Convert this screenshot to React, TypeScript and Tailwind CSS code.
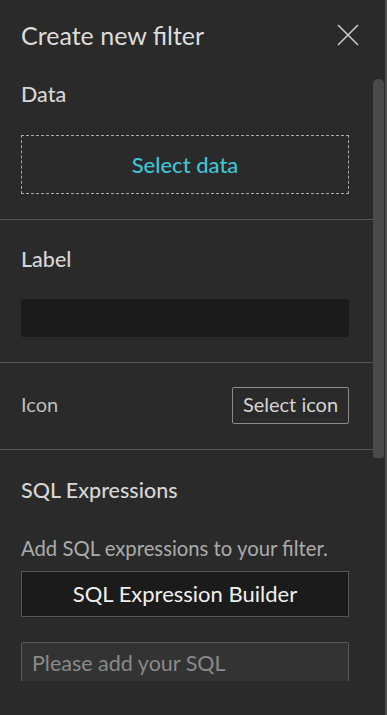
import React from "react";

const CloseIcon = () => (
    <svg width="22" height="22" viewBox="0 0 22 22" fill="none" stroke="#c9c9c9" strokeWidth="1.6">
        <path d="M1 1 L21 21 M21 1 L1 21" />
    </svg>
);

const Divider = () => <div className="h-px bg-[#555555]" />;

export default function App() {
    return (
        <div
            className="w-[387px] h-[715px] bg-[#2a2a2a] flex overflow-hidden"
            style={{ fontFamily: "Lato, 'Open Sans', sans-serif" }}
        >
            <div className="w-[373px]">
                {/* Scrollable body */}
                <div className="h-[681px] overflow-hidden">
                    {/* Header */}
                    <div className="flex items-center justify-between pl-[21px] pr-[14px] pt-[20px] pb-[1px]">
                        <h1 className="text-[25px] leading-[30px] text-[#dcdcdc]">Create new filter</h1>
                        <CloseIcon />
                    </div>

                    {/* Data */}
                    <div className="px-[21px] pt-[30px] pb-[25px]">
                        <h2 className="text-[21.5px] leading-[26px] font-medium text-[#d6d6d6]">Data</h2>
                        <div className="mt-[28px] h-[59px] w-[328px] border border-dashed border-[#a8a8a8] flex items-center justify-center">
                            <span className="text-[22px] text-[#40c4d4] font-medium">Select data</span>
                        </div>
                    </div>
                    <Divider />

                    {/* Label */}
                    <div className="px-[21px] pt-[26px] pb-[25px]">
                        <h2 className="text-[21.5px] leading-[26px] font-medium text-[#d6d6d6]">Label</h2>
                        <div className="mt-[27px] h-[38px] w-[328px] rounded-[3px] bg-[#1b1b1b]" />
                    </div>
                    <Divider />

                    {/* Icon */}
                    <div className="pl-[21px] pr-[24px] pt-[24px] pb-[25px] flex items-center justify-between">
                        <span className="text-[20px] leading-[24px] pb-[3px] text-[#bdbdbd]">Icon</span>
                        <button className="h-[37px] w-[117px] pb-[3px] rounded-[2px] border border-[#8a8a8a] text-[20px] text-[#d4d4d4]">
                            Select icon
                        </button>
                    </div>
                    <Divider />

                    {/* SQL Expressions */}
                    <div className="px-[21px] pt-[27px]">
                        <h2 className="text-[21.5px] leading-[26px] font-medium text-[#d6d6d6]">SQL Expressions</h2>
                        <p className="mt-[33px] text-[20.3px] leading-[24px] text-[#ababab]">
                            Add SQL expressions to your filter.
                        </p>
                        <button className="mt-[11px] h-[46px] w-[328px] pb-[2px] bg-[#1b1b1b] border border-[#555555] text-[22px] text-[#f0f0f0]">
                            SQL Expression Builder
                        </button>
                        <div className="mt-[25px] h-[60px] w-[328px] rounded-[2px] bg-[#333333] border border-[#5a5a5a] px-[10px] pt-[7px]">
                            <span className="text-[21.5px] leading-[26px] text-[#8a8a8a]">Please add your SQL</span>
                        </div>
                    </div>
                </div>
            </div>

            {/* Scrollbar */}
            <div className="w-[14px] flex">
                <div className="w-[12px] pt-[79px]">
                    <div className="h-[379px] w-[11px] rounded-t-[5px] rounded-b-[3px] bg-[#4a4a4a]" />
                </div>
                <div className="w-[2px] bg-[#4e4e4e]" />
            </div>
        </div>
    );
}
